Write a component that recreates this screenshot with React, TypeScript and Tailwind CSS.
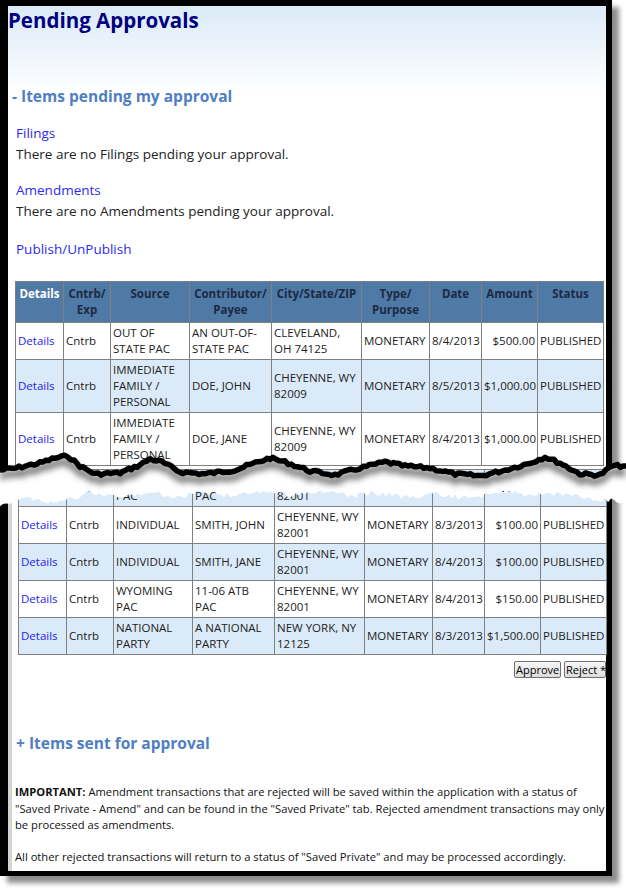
import { useMemo } from 'react'

type Row = {
  src: string[]
  payee: string[]
  city: string[]
  date: string
  amount: string
  alt: boolean
}

const cols = [48, 47, 79, 82, 90, 68, 52, 56, 66]

const heads = [
  ['Details'],
  ['Cntrb/', 'Exp'],
  ['Source'],
  ['Contributor/', 'Payee'],
  ['City/State/ZIP'],
  ['Type/', 'Purpose'],
  ['Date'],
  ['Amount'],
  ['Status'],
]

const topRows: Row[] = [
  { src: ['OUT OF', 'STATE PAC'], payee: ['AN OUT-OF-', 'STATE PAC'], city: ['CLEVELAND,', 'OH 74125'], date: '8/4/2013', amount: '$500.00', alt: false },
  { src: ['IMMEDIATE', 'FAMILY /', 'PERSONAL'], payee: ['DOE, JOHN'], city: ['CHEYENNE, WY', '82009'], date: '8/5/2013', amount: '$1,000.00', alt: true },
  { src: ['IMMEDIATE', 'FAMILY /', 'PERSONAL'], payee: ['DOE, JANE'], city: ['CHEYENNE, WY', '82009'], date: '8/4/2013', amount: '$1,000.00', alt: false },
]

const bottomRows: Row[] = [
  { src: ['WYOMING', 'PAC'], payee: ['CAPITOL', 'PAC'], city: ['CHEYENNE, WY', '82001'], date: '8/4/2013', amount: '$250.00', alt: true },
  { src: ['INDIVIDUAL'], payee: ['SMITH, JOHN'], city: ['CHEYENNE, WY', '82001'], date: '8/3/2013', amount: '$100.00', alt: false },
  { src: ['INDIVIDUAL'], payee: ['SMITH, JANE'], city: ['CHEYENNE, WY', '82001'], date: '8/4/2013', amount: '$100.00', alt: true },
  { src: ['WYOMING', 'PAC'], payee: ['11-06 ATB', 'PAC'], city: ['CHEYENNE, WY', '82001'], date: '8/4/2013', amount: '$150.00', alt: false },
  { src: ['NATIONAL', 'PARTY'], payee: ['A NATIONAL', 'PARTY'], city: ['NEW YORK, NY', '12125'], date: '8/3/2013', amount: '$1,500.00', alt: true },
]

function Lines({ lines }: { lines: string[] }) {
  return (
    <>
      {lines.map((l, i) => (
        <div key={i} className="whitespace-nowrap">{l}</div>
      ))}
    </>
  )
}

const td = 'border border-[#808080] px-[2px] py-[2px] align-middle whitespace-nowrap'

function ApprovalTable({ rows, header }: { rows: Row[]; header: boolean }) {
  return (
    <table className="table-fixed border-collapse w-[588px] text-[11.5px] leading-[16px] text-[#222]">
      <colgroup>
        {cols.map((w, i) => (
          <col key={i} style={{ width: w }} />
        ))}
      </colgroup>
      {header && (
        <thead>
          <tr className="bg-[#4f7aa5]">
            {heads.map((h, i) => (
              <th
                key={i}
                className={`border border-[#808080] px-[2px] py-[4px] align-top text-center font-bold ${i === 0 ? 'text-white' : 'text-[#1d2a44]'}`}
              >
                <Lines lines={h} />
              </th>
            ))}
          </tr>
        </thead>
      )}
      <tbody>
        {rows.map((r, i) => (
          <tr key={i} className={r.alt ? 'bg-[#dbeaf8]' : 'bg-white'}>
            <td className={td}>
              <span className="text-[#2323ee]">Details</span>
            </td>
            <td className={td}>Cntrb</td>
            <td className={td}>
              <Lines lines={r.src} />
            </td>
            <td className={td}>
              <Lines lines={r.payee} />
            </td>
            <td className={td}>
              <Lines lines={r.city} />
            </td>
            <td className={td}>MONETARY</td>
            <td className={td}>{r.date}</td>
            <td className={`${td} text-right`}>{r.amount}</td>
            <td className={td}>PUBLISHED</td>
          </tr>
        ))}
      </tbody>
    </table>
  )
}

// torn-paper edge between the two screenshot halves
function jag(pts: [number, number][], amp: number, seed: number) {
  let s = seed
  const rnd = () => {
    s = (s * 9301 + 49297) % 233280
    return s / 233280
  }
  const out: [number, number][] = []
  for (let i = 0; i < pts.length - 1; i++) {
    const [x0, y0] = pts[i]
    const [x1, y1] = pts[i + 1]
    const n = Math.max(1, Math.round((x1 - x0) / 3))
    for (let k = 0; k < n; k++) {
      const t = k / n
      out.push([x0 + (x1 - x0) * t, y0 + (y1 - y0) * t + (rnd() - 0.5) * amp])
    }
  }
  out.push(pts[pts.length - 1])
  return out
}

const OY = 448

const topEdge: [number, number][] = [
  [0, 470], [16, 468], [40, 463], [55, 458], [68, 456], [80, 466], [95, 474], [120, 473],
  [140, 465], [150, 459], [162, 462], [180, 472], [205, 474], [235, 470], [255, 463],
  [270, 458], [285, 462], [310, 471], [335, 475], [360, 468], [385, 462], [405, 466],
  [430, 468], [455, 474], [480, 476], [505, 470], [530, 463], [545, 457], [560, 463],
  [580, 474], [600, 475], [612, 466], [626, 466],
]

const bottomEdge: [number, number][] = [
  [0, 504], [30, 498], [60, 503], [90, 493], [120, 497], [150, 492], [180, 498],
  [200, 491], [230, 496], [260, 492], [290, 495], [320, 491], [350, 496], [380, 493],
  [410, 498], [440, 494], [470, 499], [500, 491], [530, 496], [560, 493], [590, 499], [626, 502],
]

function Tear() {
  const { line, fill } = useMemo(() => {
    const t = jag(topEdge, 3, 7).map(([x, y]) => [x, y - OY] as [number, number])
    const b = jag(bottomEdge, 5, 19).map(([x, y]) => [x, y - OY] as [number, number])
    const line = 'M' + t.map(([x, y]) => `${x.toFixed(1)},${y.toFixed(1)}`).join(' L')
    const fill =
      line +
      ' L' +
      b
        .slice()
        .reverse()
        .map(([x, y]) => `${x.toFixed(1)},${y.toFixed(1)}`)
        .join(' L') +
      ' Z'
    return { line, fill }
  }, [])
  return (
    <svg className="absolute left-0 top-[448px] pointer-events-none" width="626" height="64" viewBox="0 0 626 64">
      <defs>
        <filter id="tearBlur" x="-5%" y="-50%" width="110%" height="200%">
          <feGaussianBlur stdDeviation="3" />
        </filter>
      </defs>
      <path d={fill} fill="#ffffff" />
      <path d={line} fill="none" stroke="#7a7a7a" strokeWidth="7" transform="translate(0 6)" filter="url(#tearBlur)" />
      <path d={line} fill="none" stroke="#000" strokeWidth="5.5" strokeLinejoin="round" />
    </svg>
  )
}

const btn =
  'h-[17px] whitespace-nowrap rounded-[2px] border border-[#707070] bg-[linear-gradient(#f7f7f7,#dcdcdc)] px-[1px] text-[11px] leading-[14px] text-black'

export default function App() {
  return (
    <div className="min-h-screen bg-white font-['Open_Sans',sans-serif] text-[#222]">
      <div className="relative w-[626px]">
        <div className="w-[612px] border-l-[8px] border-t-[6px] border-r-[6px] border-b-[5px] border-black bg-white shadow-[7px_7px_5px_rgba(0,0,0,0.45)]">
          {/* upper half */}
          <div className="bg-[linear-gradient(180deg,#dbeaf7_0px,#ffffff_88px)]">
            <h1 className="text-[20.5px] leading-[28px] font-bold text-[#000080]">Pending Approvals</h1>
            <h2 className="mt-[52px] pl-[4px] text-[15.5px] leading-[20px] font-bold text-[#4f7ec3]">
              - Items pending my approval
            </h2>
            <div className="pl-[8px] text-[13.5px] leading-[21px]">
              <div className="mt-[17px] text-[#2b2bf0]">Filings</div>
              <div>There are no Filings pending your approval.</div>
              <div className="mt-[15px] text-[#2b2bf0]">Amendments</div>
              <div>There are no Amendments pending your approval.</div>
              <div className="mt-[17px] text-[#2b2bf0]">Publish/UnPublish</div>
            </div>
            <div className="mt-[21px] pl-[7px]">
              <ApprovalTable rows={topRows} header />
            </div>
          </div>

          {/* lower half */}
          <div className="border-l-[4px] border-[#d4d4d4] pt-[3px]">
            <div className="pl-[6px]">
              <ApprovalTable rows={bottomRows} header={false} />
            </div>
            <div className="mt-[6px] flex justify-end gap-[3px]">
              <button className={`${btn} w-[47px]`}>Approve</button>
              <button className={`${btn} w-[42px]`}>Reject *</button>
            </div>
            <h2 className="mt-[55px] pl-[4px] text-[15.5px] leading-[20px] font-bold text-[#4f7ec3]">
              + Items sent for approval
            </h2>
            <div className="mt-[31px] pl-[3px] pb-[6px] text-[11.2px] leading-[16.5px] text-[#111]">
              <div className="whitespace-nowrap">
                <b>IMPORTANT:</b> Amendment transactions that are rejected will be saved within the application with a status of
              </div>
              <div className="whitespace-nowrap">
                "Saved Private - Amend" and can be found in the "Saved Private" tab. Rejected amendment transactions may only
              </div>
              <div className="whitespace-nowrap">be processed as amendments.</div>
              <div className="mt-[15px] whitespace-nowrap">
                All other rejected transactions will return to a status of "Saved Private" and may be processed accordingly.
              </div>
            </div>
          </div>
        </div>
        <Tear />
      </div>
    </div>
  )
}
